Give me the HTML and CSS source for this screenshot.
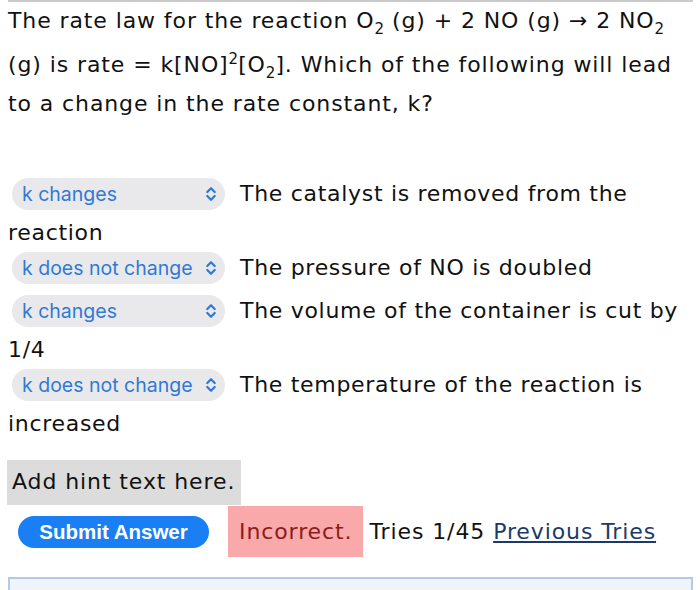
FILE: index.html
```html
<!DOCTYPE html>
<html lang="en">
<head>
    <meta charset="UTF-8">
    <title>Rate Constant Question</title>
    <link rel="stylesheet" href="styles.css">
</head>
<body>
    <div class="question">
        <p class="prompt">The rate law for the reaction O<sub>2</sub> (g) + 2 NO (g) &rarr; 2 NO<sub>2</sub> (g) is rate = k[NO]<sup>2</sup>[O<sub>2</sub>]. Which of the following will lead to a change in the rate constant, k?</p>

        <div class="options">
            <div class="option">
                <span class="pick"><span class="pick-inner">k changes<svg class="chev" viewBox="0 0 10 16"><path d="M1.3 6 L5 2.2 L8.7 6 M1.3 10 L5 13.8 L8.7 10"/></svg></span></span>The catalyst is removed from the reaction
            </div>
            <div class="option">
                <span class="pick"><span class="pick-inner">k does not change<svg class="chev" viewBox="0 0 10 16"><path d="M1.3 6 L5 2.2 L8.7 6 M1.3 10 L5 13.8 L8.7 10"/></svg></span></span>The pressure of NO is doubled
            </div>
            <div class="option">
                <span class="pick"><span class="pick-inner">k changes<svg class="chev" viewBox="0 0 10 16"><path d="M1.3 6 L5 2.2 L8.7 6 M1.3 10 L5 13.8 L8.7 10"/></svg></span></span>The volume of the container is cut by 1/4
            </div>
            <div class="option">
                <span class="pick"><span class="pick-inner">k does not change<svg class="chev" viewBox="0 0 10 16"><path d="M1.3 6 L5 2.2 L8.7 6 M1.3 10 L5 13.8 L8.7 10"/></svg></span></span>The temperature of the reaction is increased
            </div>
        </div>

        <div class="hint">Add hint text here.</div>

        <div class="submit-row">
            <button type="button" class="btn-submit">Submit Answer</button>
            <span class="feedback">Incorrect.</span>
            <span class="tries">Tries 1/45 <a href="#">Previous Tries</a></span>
        </div>

        <div class="answer-box"></div>
    </div>
</body>
</html>
```

FILE: styles.css
```css
body {
    margin: 0;
    padding: 0 7px 0 8px;
    background: #fff;
    color: #111;
    font-family: 'DejaVu Sans', Verdana, sans-serif;
    font-size: 22px;
    overflow: hidden;
}

.question {
    border-top: 2px solid #cacaca;
}

.prompt {
    margin: -1px 0 0;
    line-height: 39px;
    letter-spacing: 0.9px;
}

.prompt sub {
    font-size: 15px;
    vertical-align: -6px;
    line-height: 0;
    letter-spacing: 0;
}

.prompt sup {
    font-size: 15px;
    vertical-align: 8px;
    line-height: 39px;
    letter-spacing: 0;
}

.options {
    margin-top: 51px;
    letter-spacing: 0.7px;
}

.option {
    line-height: 31px;
}

.pick {
    display: inline-block;
    overflow: hidden;
    width: 213px;
    height: 32px;
    margin: 3.5px 15px 7.5px 4px;
    border-radius: 16px;
    background: #e9e9eb;
    vertical-align: -16.5px;
    letter-spacing: 0;
}

.pick-inner {
    display: flex;
    align-items: center;
    justify-content: space-between;
    height: 32px;
    padding: 0 9px 0 10px;
    color: #2f7ad6;
    font-family: Inter, 'Open Sans', sans-serif;
    font-size: 19.5px;
    line-height: 32px;
}

.chev {
    width: 10px;
    height: 16px;
    fill: none;
    stroke: #2f7ad6;
    stroke-width: 2.2;
    stroke-linecap: round;
    stroke-linejoin: round;
}

.hint {
    display: inline-block;
    margin-top: 21px;
    margin-left: -1px;
    padding: 5px 6px 6px 5px;
    background: #dcdcdc;
    line-height: 34px;
    letter-spacing: 0.9px;
}

.submit-row {
    display: flex;
    align-items: center;
    margin-top: 1px;
    letter-spacing: 0.9px;
}

.btn-submit {
    margin-left: 10px;
    width: 191px;
    height: 32px;
    padding: 0;
    border: none;
    border-radius: 16px;
    background: #1a7ff5;
    color: #fff;
    font-family: 'Liberation Sans', Arial, sans-serif;
    font-weight: bold;
    font-size: 20.5px;
    letter-spacing: 0;
}

.feedback {
    margin-left: 19px;
    padding: 0 11px;
    height: 51px;
    line-height: 51px;
    background: #f9a9a9;
    color: #8a1c1c;
}

.tries {
    margin-left: 6px;
}

.tries a {
    color: #1b3a6b;
}

.answer-box {
    margin-top: 20px;
    height: 40px;
    border: 2px solid #b2cae8;
    background: #eef3fd;
}
```
